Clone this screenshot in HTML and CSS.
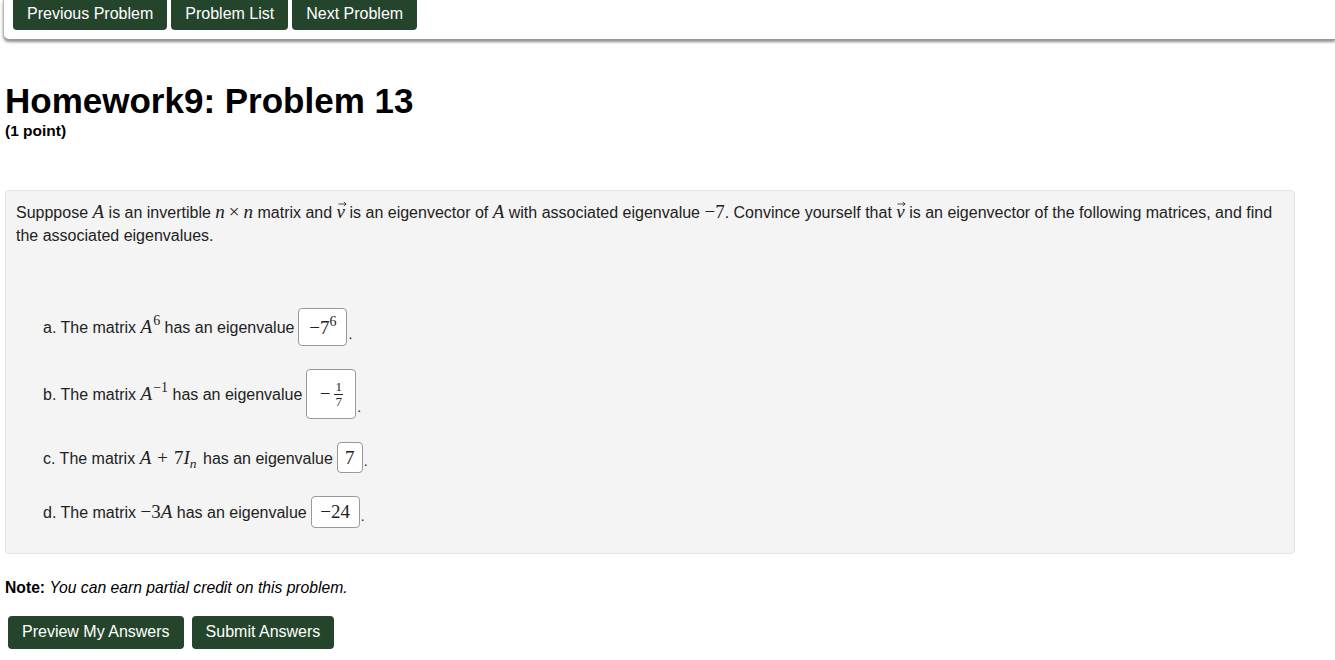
FILE: index.html
```html
<!DOCTYPE html>
<html>
<head>
<meta charset="utf-8">
<link rel="stylesheet" href="styles.css">
</head>
<body>
<div class="nav">
  <a class="btn navbtn">Previous Problem</a>
  <a class="btn navbtn">Problem List</a>
  <a class="btn navbtn">Next Problem</a>
</div>
<div class="page">
  <h1 class="title">Homework9: Problem 13</h1>
  <div class="points">(1 point)</div>
  <div class="problem">
    <p class="intro">Supppose <span class="m i">A</span> is an invertible <span class="m i">n</span><span class="m op">×</span><span class="m i">n</span> matrix and <span class="m i vec">v<svg class="arrow" viewBox="0 0 10 6" width="9" height="6"><path d="M0.5 3H9M6.5 0.8L9 3L6.5 5.2" fill="none" stroke="#222" stroke-width="0.9"/></svg></span> is an eigenvector of <span class="m i">A</span> with associated eigenvalue <span class="m">−7</span>. Convince yourself that <span class="m i vec">v<svg class="arrow" viewBox="0 0 10 6" width="9" height="6"><path d="M0.5 3H9M6.5 0.8L9 3L6.5 5.2" fill="none" stroke="#222" stroke-width="0.9"/></svg></span> is an eigenvector of the following matrices, and find the associated eigenvalues.</p>
    <div class="items">
      <div class="item"><span class="lbl">a. The matrix <span class="m i">A</span><sup class="m sup">6</sup> has an eigenvalue</span><span class="ans ans-a"><span class="inner"><span class="m">−7</span><sup class="m sup2">6</sup></span></span><span class="dot">.</span></div>
      <div class="item"><span class="lbl">b. The matrix <span class="m i">A</span><sup class="m sup">−1</sup> has an eigenvalue</span><span class="ans ans-b"><span class="m">−</span><span class="frac"><span class="num">1</span><span class="den">7</span></span></span><span class="dot">.</span></div>
      <div class="item"><span class="lbl">c. The matrix <span class="m i">A</span><span class="m op op-c">+</span><span class="m">7</span><span class="m i">I</span><sub class="m i sub">n</sub> has an eigenvalue</span><span class="ans ans-c"><span class="m">7</span></span><span class="dot">.</span></div>
      <div class="item"><span class="lbl">d. The matrix <span class="m">−3</span><span class="m i">A</span> has an eigenvalue</span><span class="ans ans-d"><span class="m">−24</span></span><span class="dot">.</span></div>
    </div>
  </div>
  <p class="note"><b>Note:</b> <i>You can earn partial credit on this problem.</i></p>
  <div class="actions">
    <a class="btn actbtn">Preview My Answers</a>
    <a class="btn actbtn">Submit Answers</a>
  </div>
</div>
</body>
</html>
```
FILE: styles.css
```css
html, body {
  margin: 0;
  padding: 0;
  background: #fff;
  font-family: "Liberation Sans", Arial, sans-serif;
  color: #000;
}
.nav {
  margin-left: 3px;
  height: 39px;
  background: #fff;
  border-left: 1px solid #bbb;
  border-bottom: 1px solid #999;
  border-bottom-left-radius: 6px;
  box-shadow: 0 2px 3px rgba(0,0,0,0.45);
  display: flex;
  gap: 4px;
  padding-left: 9px;
  align-items: flex-start;
}
.btn {
  background: #24452b;
  color: #fff;
  border-radius: 0 0 4px 4px;
  font-size: 16px;
  display: flex;
  align-items: center;
  justify-content: center;
  box-sizing: border-box;
}
.navbtn {
  height: 30px;
  padding: 0 14px 2px;
}
.page {
  padding-left: 5px;
}
.title {
  margin: 41px 0 0;
  font-size: 35px;
  line-height: 40px;
  font-weight: bold;
}
.points {
  font-size: 15.5px;
  font-weight: bold;
  line-height: 18px;
  margin-top: 1px;
}
.problem {
  margin-top: 50px;
  width: 1290px;
  box-sizing: border-box;
  background: #f4f4f4;
  border: 1px solid #e3e3e3;
  border-radius: 4px;
  padding: 9px 10px 25px;
  font-size: 16px;
  color: #222;
}
.intro {
  margin: 0;
  line-height: 23px;
}
.m {
  font-family: "Liberation Serif", "Times New Roman", serif;
  font-size: 19px;
}
.i { font-style: italic; }
.op { padding: 0 4px; }
.op-c { padding: 0 6px; }
.vec { position: relative; }
.arrow {
  position: absolute;
  left: 1px;
  top: 0px;
}
.sup { font-size: 14px; vertical-align: 8px; line-height: 0; margin-left: 1px; }
.sup2 { font-size: 14px; vertical-align: 8px; line-height: 0; }
.sub { font-size: 13.5px; vertical-align: -4px; line-height: 0; margin-right: 2px; }
.items {
  margin-top: 61px;
  padding-left: 27px;
  display: flex;
  flex-direction: column;
  gap: 23px;
}
.item {
  display: flex;
  align-items: center;
}
.lbl { white-space: nowrap; }
.ans {
  display: inline-flex;
  align-items: center;
  justify-content: center;
  background: #fff;
  border: 1px solid #999;
  border-radius: 4px;
  box-sizing: border-box;
  margin-left: 4px;
}
.inner { white-space: nowrap; }
.ans-a { width: 49px; height: 38px; padding-top: 2px; }
.ans-b { width: 50px; height: 50px; gap: 4px; }
.ans-c { width: 26px; height: 31px; }
.ans-d { width: 49px; height: 32px; }
.frac {
  display: inline-flex;
  flex-direction: column;
  align-items: center;
  font-family: "Liberation Serif", serif;
  font-size: 13px;
  line-height: 14px;
}
.num { border-bottom: 1px solid #222; padding: 0 1px; }
.dot { font-size: 14px; align-self: flex-end; margin-left: 1px; margin-bottom: 4px; }
.note {
  margin: 25px 0 0;
  font-size: 15.7px;
  line-height: 18px;
}
.actions {
  display: flex;
  gap: 8px;
  margin-top: 19px;
  padding-left: 3px;
}
.actbtn {
  height: 33px;
  border-radius: 4px;
  padding: 0 14px 1px;
  font-size: 16px;
}
```
